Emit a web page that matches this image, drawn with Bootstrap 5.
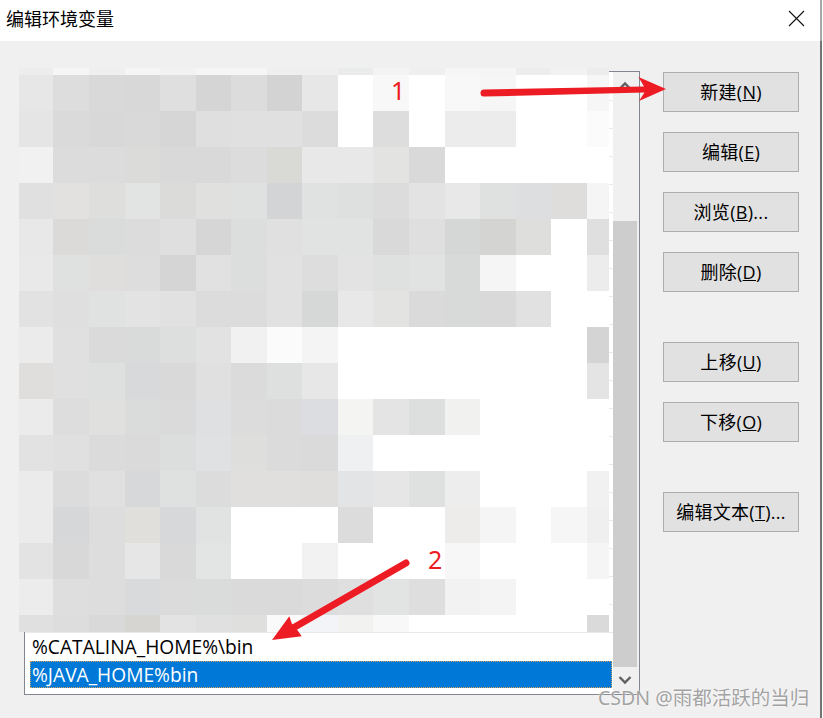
<!DOCTYPE html>
<html lang="zh-CN">
<head>
<meta charset="utf-8">
<title>编辑环境变量</title>
<link href="https://cdn.jsdelivr.net/npm/bootstrap@5.3.0/dist/css/bootstrap.min.css" rel="stylesheet">
<style>
html,body{height:100%;margin:0;overflow:hidden;background:#fff}
body{font-family:"Open Sans","Noto Sans CJK SC",sans-serif;color:#000;font-size:18px}
.dlg{width:822px;height:718px;position:relative}
.ttl{height:41px;padding:0 15px 0 6px;background:#fff;border-right:2px solid #a8a8a8}
.ttl-text{font-family:"Noto Sans CJK SC",sans-serif;font-size:18px;line-height:36px}
.ttl-x{margin-top:10px}
.client{background:#f0f0f0;padding:30px 0 0 24px;border-right:2px solid #747474}
.lbox{width:616px;height:624px;border:1px solid #82868f;background:#fff;position:relative}
.rows{width:588px;padding-top:1px}
.vrow{height:28px;line-height:27px;padding:0 0 0 7px;font-size:19.2px;white-space:nowrap;border:0;border-radius:0;background:transparent;color:#000}
.vrow-blank{border-bottom:1px solid #e9e9e9}
.vrow-sel{height:27px;margin:0 1px 0 5px;padding:0 0 0 1px;line-height:25px;background:#0078d7;color:#fff;border:1px dotted #d9a25f}
.sbar{width:26px;background:#f0f0f0;height:100%;position:relative}
.sb-btn{height:28px;width:24px}
.sb-track{flex:1 1 auto;width:24px;position:relative}
.sb-thumb{background:#cdcdcd;width:24px;height:446px;margin-top:121px}
.mosaic{position:absolute;left:-6px;top:-4px;width:590px;height:564px;display:grid;
 grid-template-columns:34px 36px 36px 35px 36px 35px 36px 35px 36px 35px 36px 36px 35px 36px 35px 36px 22px;
 grid-template-rows:7px repeat(15,36px) 17px}
.btns{margin-left:23px;margin-top:1px;width:136px}
.wbtn{width:136px;height:40px;padding:0;background:#e1e1e1;border:1px solid #adadad;border-radius:0;color:#000;font-size:18px;letter-spacing:.3px;line-height:36px;font-family:"Open Sans","Noto Sans CJK SC",sans-serif}
.wbtn:hover{background:#e1e1e1;border-color:#adadad;color:#000}
.mt-btn{margin-top:20px}
.gap-big{margin-top:50px}
.over{position:absolute;left:0;top:0;width:823px;height:718px;pointer-events:none}
.num{position:absolute;color:#ed1c24;font-family:"Noto Sans",sans-serif;font-size:25px;line-height:30px}
.num-a{left:391px;top:75px}
.num-b{left:428px;top:544px}
.wm{position:absolute;left:598px;top:684px;font-size:19.5px;line-height:28px;color:#a3a3a3;white-space:nowrap;font-family:"Noto Sans","Noto Sans CJK SC",sans-serif;text-shadow:0 0 2px #fff}
</style>
</head>
<body>
<div class="dlg d-flex flex-column">
  <div class="ttl d-flex justify-content-between align-items-start">
    <span class="ttl-text">编辑环境变量</span>
    <svg class="ttl-x" width="17" height="17" viewBox="0 0 17 17" aria-label="关闭"><path d="M1 1L16 16M16 1L1 16" stroke="#111" stroke-width="1.1" fill="none"/></svg>
  </div>
  <div class="client d-flex flex-grow-1 align-items-start">
    <div class="lbox d-flex">
      <div class="rows" id="rows">
        <div class="vrow">%CATALINA_HOME%\bin</div>
        <div class="vrow vrow-sel">%JAVA_HOME%bin</div>
      </div>
      <div class="sbar d-flex flex-column">
        <div class="sb-btn d-flex justify-content-center align-items-center">
          <svg width="14" height="10" viewBox="0 0 14 10"><path d="M1.5 8L7 2.5L12.5 8" stroke="#606060" stroke-width="2.4" fill="none"/></svg>
        </div>
        <div class="sb-track d-flex flex-column"><div class="sb-thumb"></div></div>
        <div class="sb-btn d-flex justify-content-center align-items-center">
          <svg width="14" height="10" viewBox="0 0 14 10"><path d="M1.5 2L7 7.5L12.5 2" stroke="#606060" stroke-width="2.4" fill="none"/></svg>
        </div>
      </div>
      <div class="mosaic" id="mosaic"></div>
    </div>
    <div class="btns d-flex flex-column">
      <button class="btn wbtn" type="button">新建(<u>N</u>)</button>
      <button class="btn wbtn mt-btn" type="button">编辑(<u>E</u>)</button>
      <button class="btn wbtn mt-btn" type="button">浏览(<u>B</u>)...</button>
      <button class="btn wbtn mt-btn" type="button">删除(<u>D</u>)</button>
      <button class="btn wbtn gap-big" type="button">上移(<u>U</u>)</button>
      <button class="btn wbtn mt-btn" type="button">下移(<u>O</u>)</button>
      <button class="btn wbtn gap-big" type="button">编辑文本(<u>T</u>)...</button>
    </div>
  </div>
</div>
<div class="over">
  <svg width="823" height="718" viewBox="0 0 823 718">
    <path d="M484 89.6L644 86.4L638.5 77L666 89L639 101L644.5 92.6L484 96.6A3.5 3.5 0 0 1 484 89.6Z" fill="#ed1c24"/>
    <line x1="406" y1="563" x2="293" y2="628" stroke="#ed1c24" stroke-width="7" stroke-linecap="round"/>
    <polygon points="272,640 289.3,616.3 292,624 298,631 301.7,636.3" fill="#ed1c24"/>
  </svg>
  <span class="num num-a">1</span>
  <span class="num num-b">2</span>
  <span class="wm">CSDN @雨都活跃的当归</span>
</div>
<script>
var rows=document.getElementById('rows');
for(var i=0;i<20;i++){var r=document.createElement('div');r.className='vrow vrow-blank';rows.insertBefore(r,rows.firstChild);}
var f='ffffff';
var data=[
['ededed','f5f5f5','efefef','f5f5f5','f2f2f2','f6f6f6','f5f5f5','efefef','efefef','eaecec','f3f3f3','efefef','f6f6f6','f5f5f5','ededed','f2f2f2','ececec'],
['e7e7e7','dddddd','d9d9d9','d8d8d8','dfdfdf','d5d5d5','dcdcdc','d3d3d3','e6e7e6',f,'f8f8f8',f,'f8f8f8','f5f6f5',f,f,'f6f6f6'],
['e5e5e5','dadada','d8d8d8','d9d9d9','d6d6d6','dfdfdf','e0e0e0','dfe0df','dcdcdc',f,'dddddd',f,'ececec','ececec',f,f,'fbfbfb'],
['f1f1f1','dcdcdc','dcdcdc','dbdbd9','d9d9d9','d9d9d9','dcdcdc','d9d9d6','e8e8e8','e8e8e8','e3e3e1','d9d9d9',f,f,f,f,f],
['e0e0e0','e2e1df','dededc','e2e3e3','dbdbda','e0e0de','dfe0e0','d3d4d6','e0e1e1','dee0df','dcdcdc','e3e3e3','e8e8e8','dfe1e1','dcdee0','dedddb','f5f5f5'],
['e8e8e8','dcdad8','d9dcdb','dcdcdc','dfdfdf','d6d6d6','dcdede','e0e0e0','e1e3e3','e1e2e2','d9d9d9','dfdfdf','d5d7d6','d4d4d2','dededc',f,'dfdfdf'],
['e9e9e9','dfe1e0','dfdedc','dddddd','d5d5d5','e1e1e1','dbdedd','e1e1e1','dddddd','e3e3e3','dfe0e0','e1e3e2','d8d9d9','f5f5f5',f,f,'ececec'],
['e2e2e2','dfdfdf','e0e2e1','e3e3e3','e1e1e1','dcdcdc','dcdcdc','e1e1e1','d6d8d7','e8e8e8','e3e3e1','dadada','d8dada','d9d9d9','e1e1e1',f,f],
['ebebeb','e0e0e0','dadada','d9dbda','dcdfdd','e2e2e2','f1f1f1','fbfbfb','f4f4f4',f,f,f,f,f,f,f,'d4d4d4'],
['dfdedc','e0e0e0','dee0df','d8d9db','d9d9d9','e0e0e0','dbdbdb','dee0df','e7e7e7',f,f,f,f,f,f,f,'e4e4e4'],
['ebebeb','dddddd','e0e0de','dadcdb','dadada','dfe0e2','dcdcdc','dbdbdb','dcdde0','f4f4f2','e4e4e4','dddfde','f1f1ef',f,f,f,f],
['e2e2e2','e0e0e0','dbdbdb','dadada','dcdedd','e0e1e3','dededc','dcdbdb','dadada','eef0f2',f,f,f,f,f,f,f],
['ebebeb','dcdcdc','e0e0e0','d7d8da','dfe1e0','dcdcdc','e0dfdd','e0dfdd','dfdedc','e3e4e6','e6e6e6','dfe1e0','ededed',f,f,f,'f1f1f1'],
['ebebeb','d6d7d9','dddddd','e0dfdc','d7d8da','e1e3e2',f,f,f,'dcdcdc',f,f,'edecea','f5f5f5',f,'f6f6f6','efefef'],
['e3e3e3','d8d8d8','dddddd','e6e6e6','d9d9d9','e3e5e4',f,f,'f2f2f2',f,f,f,'f7f7f7',f,f,f,'f5f5f5'],
['ececec','dedede','dddddd','d9dadc','dadbda','dadcdb','dadada','dadada','dcdcdc','dfdfdf','e2e4e3','dedede','f2f2f2','f4f4f4',f,f,f],
['e0e0e0','dddddd','d9d9d9','d6d5d2','e3e3e3','e0e0e0','dfdfdd','fafafa','f2f4f7','f2f2f0','f8f8f8',f,f,f,f,f,'dadada']
];
var m=document.getElementById('mosaic');
data.forEach(function(row){row.forEach(function(c){var d=document.createElement('div');d.style.background='#'+c;m.appendChild(d);});});
</script>
<script src="https://cdn.jsdelivr.net/npm/bootstrap@5.3.0/dist/js/bootstrap.bundle.min.js"></script>
</body>
</html>
